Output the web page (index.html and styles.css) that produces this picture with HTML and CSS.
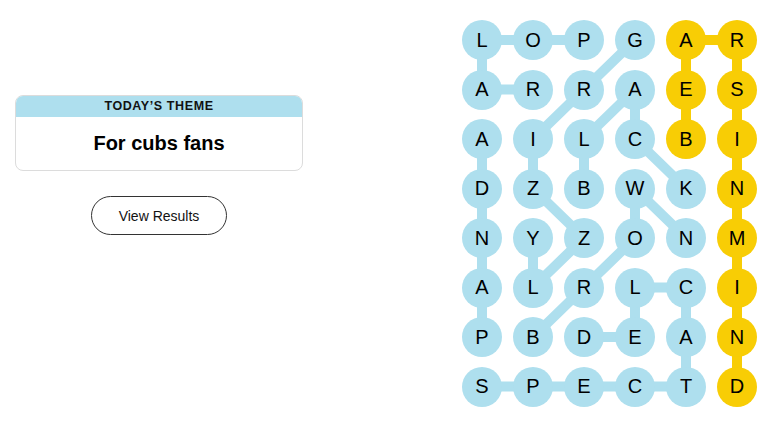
FILE: index.html
```html
<!DOCTYPE html>
<html>
<head>
<meta charset="utf-8">
<link rel="stylesheet" href="styles.css">
</head>
<body>
<div class="page">
  <div class="side">
    <div class="theme-card">
      <div class="theme-head">TODAY’S THEME</div>
      <div class="theme-body">For cubs fans</div>
    </div>
    <div class="btn-row"><button class="results-btn">View Results</button></div>
  </div>
  <div class="board">
    <svg class="links" width="295" height="387" viewBox="0 0 295 387">
      <g fill="none" stroke-width="10" stroke-linejoin="round" stroke-linecap="round">
        <polyline class="blue" points="122,20 71,20 20,20 20,69.5 71,69.5"/>
        <polyline class="blue" points="173,20 122,69.5 71,119 71,168.5 122,218 71,267.5 71,218"/>
        <polyline class="blue" points="122,168.5 122,119 173,69.5 173,119 224,168.5"/>
        <polyline class="blue" points="20,317 20,267.5 20,218 20,168.5 20,119"/>
        <polyline class="blue" points="71,317 122,267.5 173,218 173,168.5 224,218"/>
        <polyline class="blue" points="20,366.5 71,366.5 122,366.5 173,366.5 224,366.5 224,317 224,267.5 173,267.5 173,317 122,317"/>
        <polyline class="gold" points="224,119 224,69.5 224,20 275,20 275,69.5 275,119 275,168.5 275,218 275,267.5 275,317 275,366.5"/>
      </g>
    </svg>
    <div class="grid">
      <div class="cell">L</div><div class="cell">O</div><div class="cell">P</div><div class="cell">G</div><div class="cell span">A</div><div class="cell span">R</div>
      <div class="cell">A</div><div class="cell">R</div><div class="cell">R</div><div class="cell">A</div><div class="cell span">E</div><div class="cell span">S</div>
      <div class="cell">A</div><div class="cell">I</div><div class="cell">L</div><div class="cell">C</div><div class="cell span">B</div><div class="cell span">I</div>
      <div class="cell">D</div><div class="cell">Z</div><div class="cell">B</div><div class="cell">W</div><div class="cell">K</div><div class="cell span">N</div>
      <div class="cell">N</div><div class="cell">Y</div><div class="cell">Z</div><div class="cell">O</div><div class="cell">N</div><div class="cell span">M</div>
      <div class="cell">A</div><div class="cell">L</div><div class="cell">R</div><div class="cell">L</div><div class="cell">C</div><div class="cell span">I</div>
      <div class="cell">P</div><div class="cell">B</div><div class="cell">D</div><div class="cell">E</div><div class="cell">A</div><div class="cell span">N</div>
      <div class="cell">S</div><div class="cell">P</div><div class="cell">E</div><div class="cell">C</div><div class="cell">T</div><div class="cell span">D</div>
    </div>
  </div>
</div>
</body>
</html>
```

FILE: styles.css
```css
html, body {
  margin: 0;
  padding: 0;
  background: #ffffff;
}
body {
  font-family: "Liberation Sans", Arial, sans-serif;
  color: #000;
}
.page {
  display: flex;
  width: 768px;
  height: 431px;
}
.side {
  width: 288px;
  margin-left: 15px;
  padding-top: 95px;
}
.theme-card {
  border: 1px solid #dcdcdc;
  border-radius: 8px;
  overflow: hidden;
  height: 76px;
  box-sizing: border-box;
  display: flex;
  flex-direction: column;
}
.theme-head {
  background: #aedfee;
  height: 21px;
  line-height: 21px;
  text-align: center;
  font-weight: bold;
  font-size: 12.5px;
  letter-spacing: 0.6px;
  color: #121212;
}
.theme-body {
  flex: 1;
  display: flex;
  align-items: center;
  justify-content: center;
  font-weight: bold;
  font-size: 20px;
  color: #000;
}
.btn-row {
  display: flex;
  justify-content: center;
  padding-top: 25px;
}
.results-btn {
  width: 136px;
  height: 39px;
  border: 1px solid #333;
  border-radius: 20px;
  background: #fff;
  font-family: "Liberation Sans", Arial, sans-serif;
  font-size: 14px;
  color: #121212;
  padding: 0;
}
.board {
  position: relative;
  margin-left: 159px;
  margin-top: 20px;
  width: 295px;
  height: 387px;
}
.links {
  position: absolute;
  left: 0;
  top: 0;
}
.links .blue { stroke: #aedfee; }
.links .gold { stroke: #f8cd05; }
.grid {
  position: relative;
  display: grid;
  grid-template-columns: repeat(6, 40px);
  grid-auto-rows: 40px;
  column-gap: 11px;
  row-gap: 9.5px;
}
.cell {
  width: 40px;
  height: 40px;
  border-radius: 50%;
  background: #aedfee;
  display: flex;
  align-items: center;
  justify-content: center;
  font-size: 20px;
  color: #000;
}
.cell.span {
  background: #f8cd05;
}
```
